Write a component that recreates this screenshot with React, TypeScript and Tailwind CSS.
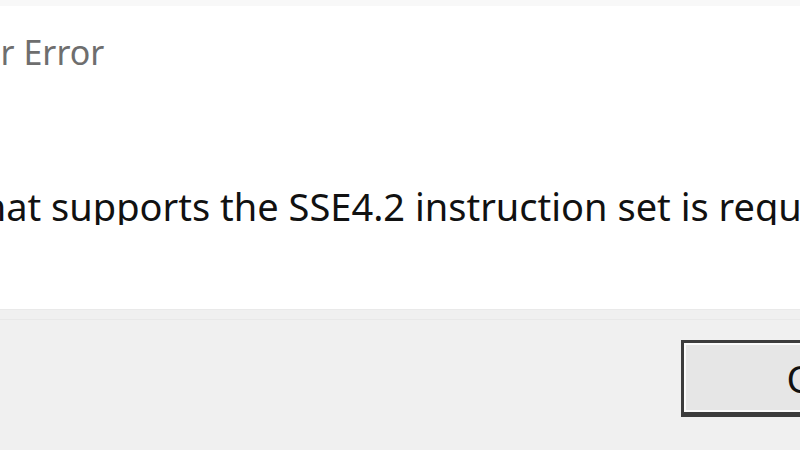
export default function App() {
  const font = { fontFamily: '"Noto Sans", "Open Sans", sans-serif' };
  return (
    <div
      className="w-[800px] h-[450px] overflow-hidden flex flex-col bg-white"
      style={font}
    >
      {/* Dialog body */}
      <div className="h-[309px] shrink-0 flex flex-col bg-white">
        <div className="h-[6px] bg-[#f8f8f8]" />
        <div className="pt-[29px] whitespace-nowrap overflow-hidden">
          <span className="block ml-[-20px] text-[34px] leading-none text-[#6e6e6e]">
            or Error
          </span>
        </div>
        <div className="pt-[118px] whitespace-nowrap overflow-hidden">
          <span className="block ml-[-31px] text-[38px] leading-none text-[#111]">
            that supports the SSE4.2 instruction set is required.
          </span>
        </div>
      </div>

      {/* Button bar */}
      <div className="flex-1 bg-[#f0f0f0] border-t border-[#e9e9e9] overflow-hidden">
        <div className="h-[10px] border-b border-[#e8e8e8]" />
        <div className="flex pl-[681px] pt-[20px]">
          <button className="shrink-0 w-[264px] h-[77px] bg-[#e6e6e6] border-[3px] border-b-[5px] border-[#3c3c3c] shadow-[inset_0_0_0_2px_#fbfbfb] text-[38px] leading-none text-[#111]">
            OK
          </button>
        </div>
      </div>
    </div>
  );
}
